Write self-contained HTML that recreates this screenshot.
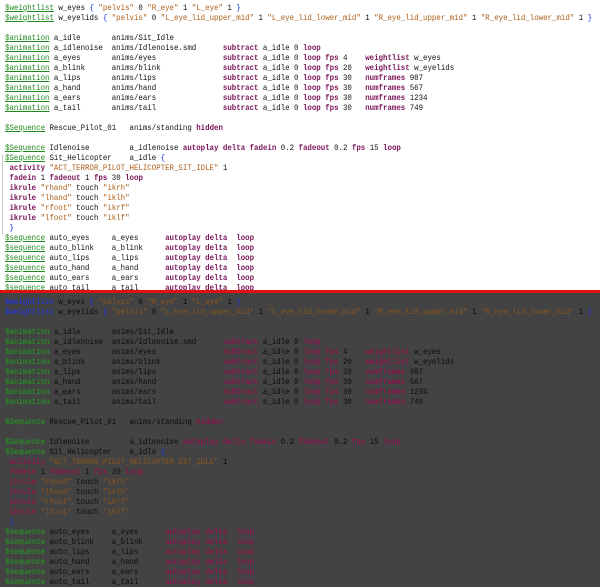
<!DOCTYPE html>
<html><head><meta charset="utf-8"><style>
html,body{margin:0;padding:0;width:600px;height:587px;overflow:hidden;background:#fff}
pre{margin:0;font-family:"Liberation Mono","DejaVu Sans Mono",monospace;font-size:8.2px;line-height:10px;white-space:pre;position:absolute;left:5px;transform-origin:0 0;transform:scaleX(0.905)}
#top{top:4px;color:#111}
#dark{position:absolute;left:0;top:293px;width:600px;height:294px;background:#434343}
#red{position:absolute;left:0;top:290px;width:600px;height:3px;background:#e01010}
#bot{top:5px;color:#0c0c0c}
#top .g{color:#1f8a1f;text-decoration:underline}
#top .s{color:#b0601a}
#top .k{color:#7a1358;font-weight:bold}
#top .b{color:#1030e0}
#bot .g{color:#1fa01f}
#bot .s{color:#8a5420}
#bot .k{color:#a0064e}
#bot .b{color:#1a30f0}
.fold{position:absolute;left:2px;width:1px;background:#c8c8c8}
</style></head><body>
<div class="fold" style="top:154px;height:80px"></div>
<pre id="top"><span class="g">$weightlist</span> w_eyes <span class="b">{</span> <span class="s">"pelvis"</span> 0 <span class="s">"R_eye"</span> 1 <span class="s">"L_eye"</span> 1 <span class="b">}</span>
<span class="g">$weightlist</span> w_eyelids <span class="b">{</span> <span class="s">"pelvis"</span> 0 <span class="s">"L_eye_lid_upper_mid"</span> 1 <span class="s">"L_eye_lid_lower_mid"</span> 1 <span class="s">"R_eye_lid_upper_mid"</span> 1 <span class="s">"R_eye_lid_lower_mid"</span> 1 <span class="b">}</span>

<span class="g">$animation</span> a_idle       anims/Sit_Idle
<span class="g">$animation</span> a_idlenoise  anims/Idlenoise.smd      <span class="k">subtract</span> a_idle 0 <span class="k">loop</span>
<span class="g">$animation</span> a_eyes       anims/eyes               <span class="k">subtract</span> a_idle 0 <span class="k">loop</span> <span class="k">fps</span> 4    <span class="k">weightlist</span> w_eyes
<span class="g">$animation</span> a_blink      anims/blink              <span class="k">subtract</span> a_idle 0 <span class="k">loop</span> <span class="k">fps</span> 20   <span class="k">weightlist</span> w_eyelids
<span class="g">$animation</span> a_lips       anims/lips               <span class="k">subtract</span> a_idle 0 <span class="k">loop</span> <span class="k">fps</span> 30   <span class="k">numframes</span> 987
<span class="g">$animation</span> a_hand       anims/hand               <span class="k">subtract</span> a_idle 0 <span class="k">loop</span> <span class="k">fps</span> 30   <span class="k">numframes</span> 567
<span class="g">$animation</span> a_ears       anims/ears               <span class="k">subtract</span> a_idle 0 <span class="k">loop</span> <span class="k">fps</span> 30   <span class="k">numframes</span> 1234
<span class="g">$animation</span> a_tail       anims/tail               <span class="k">subtract</span> a_idle 0 <span class="k">loop</span> <span class="k">fps</span> 30   <span class="k">numframes</span> 749

<span class="g">$Sequence</span> Rescue_Pilot_01   anims/standing <span class="k">hidden</span>

<span class="g">$Sequence</span> Idlenoise         a_idlenoise <span class="k">autoplay</span> <span class="k">delta</span> <span class="k">fadein</span> 0.2 <span class="k">fadeout</span> 0.2 <span class="k">fps</span> 15 <span class="k">loop</span>
<span class="g">$Sequence</span> Sit_Helicopter    a_idle <span class="b">{</span>
 <span class="k">activity</span> <span class="s">"ACT_TERROR_PILOT_HELICOPTER_SIT_IDLE"</span> 1
 <span class="k">fadein</span> 1 <span class="k">fadeout</span> 1 <span class="k">fps</span> 30 <span class="k">loop</span>
 <span class="k">ikrule</span> <span class="s">"rhand"</span> touch <span class="s">"ikrh"</span>
 <span class="k">ikrule</span> <span class="s">"lhand"</span> touch <span class="s">"iklh"</span>
 <span class="k">ikrule</span> <span class="s">"rfoot"</span> touch <span class="s">"ikrf"</span>
 <span class="k">ikrule</span> <span class="s">"lfoot"</span> touch <span class="s">"iklf"</span>
 <span class="b">}</span>
<span class="g">$sequence</span> auto_eyes     a_eyes      <span class="k">autoplay</span> <span class="k">delta</span>  <span class="k">loop</span>
<span class="g">$sequence</span> auto_blink    a_blink     <span class="k">autoplay</span> <span class="k">delta</span>  <span class="k">loop</span>
<span class="g">$sequence</span> auto_lips     a_lips      <span class="k">autoplay</span> <span class="k">delta</span>  <span class="k">loop</span>
<span class="g">$sequence</span> auto_hand     a_hand      <span class="k">autoplay</span> <span class="k">delta</span>  <span class="k">loop</span>
<span class="g">$sequence</span> auto_ears     a_ears      <span class="k">autoplay</span> <span class="k">delta</span>  <span class="k">loop</span>
<span class="g">$sequence</span> auto_tail     a_tail      <span class="k">autoplay</span> <span class="k">delta</span>  <span class="k">loop</span></pre>
<div id="red"></div>
<div id="dark">
<pre id="bot"><span class="b">$weightlist</span> w_eyes <span class="b">{</span> <span class="s">"pelvis"</span> 0 <span class="s">"R_eye"</span> 1 <span class="s">"L_eye"</span> 1 <span class="b">}</span>
<span class="b">$weightlist</span> w_eyelids <span class="b">{</span> <span class="s">"pelvis"</span> 0 <span class="s">"L_eye_lid_upper_mid"</span> 1 <span class="s">"L_eye_lid_lower_mid"</span> 1 <span class="s">"R_eye_lid_upper_mid"</span> 1 <span class="s">"R_eye_lid_lower_mid"</span> 1 <span class="b">}</span>

<span class="g">$animation</span> a_idle       anims/Sit_Idle
<span class="g">$animation</span> a_idlenoise  anims/Idlenoise.smd      <span class="k">subtract</span> a_idle 0 <span class="k">loop</span>
<span class="g">$animation</span> a_eyes       anims/eyes               <span class="k">subtract</span> a_idle 0 <span class="k">loop</span> <span class="k">fps</span> 4    <span class="k">weightlist</span> w_eyes
<span class="g">$animation</span> a_blink      anims/blink              <span class="k">subtract</span> a_idle 0 <span class="k">loop</span> <span class="k">fps</span> 20   <span class="k">weightlist</span> w_eyelids
<span class="g">$animation</span> a_lips       anims/lips               <span class="k">subtract</span> a_idle 0 <span class="k">loop</span> <span class="k">fps</span> 30   <span class="k">numframes</span> 987
<span class="g">$animation</span> a_hand       anims/hand               <span class="k">subtract</span> a_idle 0 <span class="k">loop</span> <span class="k">fps</span> 30   <span class="k">numframes</span> 567
<span class="g">$animation</span> a_ears       anims/ears               <span class="k">subtract</span> a_idle 0 <span class="k">loop</span> <span class="k">fps</span> 30   <span class="k">numframes</span> 1234
<span class="g">$animation</span> a_tail       anims/tail               <span class="k">subtract</span> a_idle 0 <span class="k">loop</span> <span class="k">fps</span> 30   <span class="k">numframes</span> 749

<span class="g">$Sequence</span> Rescue_Pilot_01   anims/standing <span class="k">hidden</span>

<span class="g">$Sequence</span> Idlenoise         a_idlenoise <span class="k">autoplay</span> <span class="k">delta</span> <span class="k">fadein</span> 0.2 <span class="k">fadeout</span> 0.2 <span class="k">fps</span> 15 <span class="k">loop</span>
<span class="g">$Sequence</span> Sit_Helicopter    a_idle <span class="b">{</span>
 <span class="k">activity</span> <span class="s">"ACT_TERROR_PILOT_HELICOPTER_SIT_IDLE"</span> 1
 <span class="k">fadein</span> 1 <span class="k">fadeout</span> 1 <span class="k">fps</span> 30 <span class="k">loop</span>
 <span class="k">ikrule</span> <span class="s">"rhand"</span> touch <span class="s">"ikrh"</span>
 <span class="k">ikrule</span> <span class="s">"lhand"</span> touch <span class="s">"iklh"</span>
 <span class="k">ikrule</span> <span class="s">"rfoot"</span> touch <span class="s">"ikrf"</span>
 <span class="k">ikrule</span> <span class="s">"lfoot"</span> touch <span class="s">"iklf"</span>
 <span class="b">}</span>
<span class="g">$sequence</span> auto_eyes     a_eyes      <span class="k">autoplay</span> <span class="k">delta</span>  <span class="k">loop</span>
<span class="g">$sequence</span> auto_blink    a_blink     <span class="k">autoplay</span> <span class="k">delta</span>  <span class="k">loop</span>
<span class="g">$sequence</span> auto_lips     a_lips      <span class="k">autoplay</span> <span class="k">delta</span>  <span class="k">loop</span>
<span class="g">$sequence</span> auto_hand     a_hand      <span class="k">autoplay</span> <span class="k">delta</span>  <span class="k">loop</span>
<span class="g">$sequence</span> auto_ears     a_ears      <span class="k">autoplay</span> <span class="k">delta</span>  <span class="k">loop</span>
<span class="g">$sequence</span> auto_tail     a_tail      <span class="k">autoplay</span> <span class="k">delta</span>  <span class="k">loop</span></pre>
</div>
</body></html>
